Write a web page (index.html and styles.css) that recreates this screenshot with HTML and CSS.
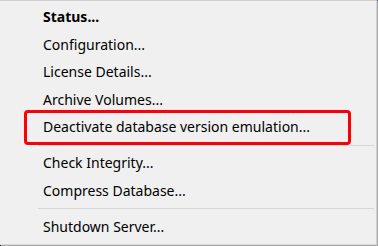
FILE: index.html
```html
<!DOCTYPE html>
<html lang="en">
<head>
    <meta charset="UTF-8">
    <title>Server menu</title>
    <link rel="stylesheet" href="styles.css">
</head>
<body>
    <div class="desktop">
        <div class="menu">
            <div class="item bold">Status...</div>
            <div class="item">Configuration...</div>
            <div class="item">License Details...</div>
            <div class="item">Archive Volumes...</div>
            <div class="item flagged">Deactivate database version emulation...</div>
            <div class="sep"></div>
            <div class="item">Check Integrity...</div>
            <div class="item">Compress Database...</div>
            <div class="sep"></div>
            <div class="item">Shutdown Server...</div>
        </div>
    </div>
</body>
</html>
```

FILE: styles.css
```css
* {
    box-sizing: border-box;
    margin: 0;
    padding: 0;
}

html, body {
    height: 100%;
    background-color: #1c1c1c;
}

.desktop {
    width: 378px;
    height: 245px;
    background-color: #0d5a90;
}

.menu {
    width: 377px;
    height: 245px;
    background-color: #f0f0f0;
    border-top: 1px solid #cfcfcf;
    border-right: 1px solid #d2d2d2;
    border-bottom: 1px solid #dadada;
    box-shadow: 1px 1px 0 #a8a8a8;
    padding-top: 2px;
    font-family: "Noto Sans", "Open Sans", sans-serif;
    font-size: 14px;
    color: #000;
}

.item {
    position: relative;
    height: 27.5px;
    line-height: 27.5px;
    padding-left: 43px;
    white-space: nowrap;
}

.item.bold {
    font-weight: bold;
}

.item.flagged::after {
    content: "";
    position: absolute;
    top: -3px;
    bottom: -4px;
    left: 24px;
    right: 25px;
    border: 3px solid #ff0000;
    border-radius: 4px;
}

.sep {
    height: 8.5px;
    padding-top: 4px;
    margin-left: 38px;
    margin-right: 2px;
}

.sep::before {
    content: "";
    display: block;
    height: 1px;
    background-color: #d7d7d7;
}
```
